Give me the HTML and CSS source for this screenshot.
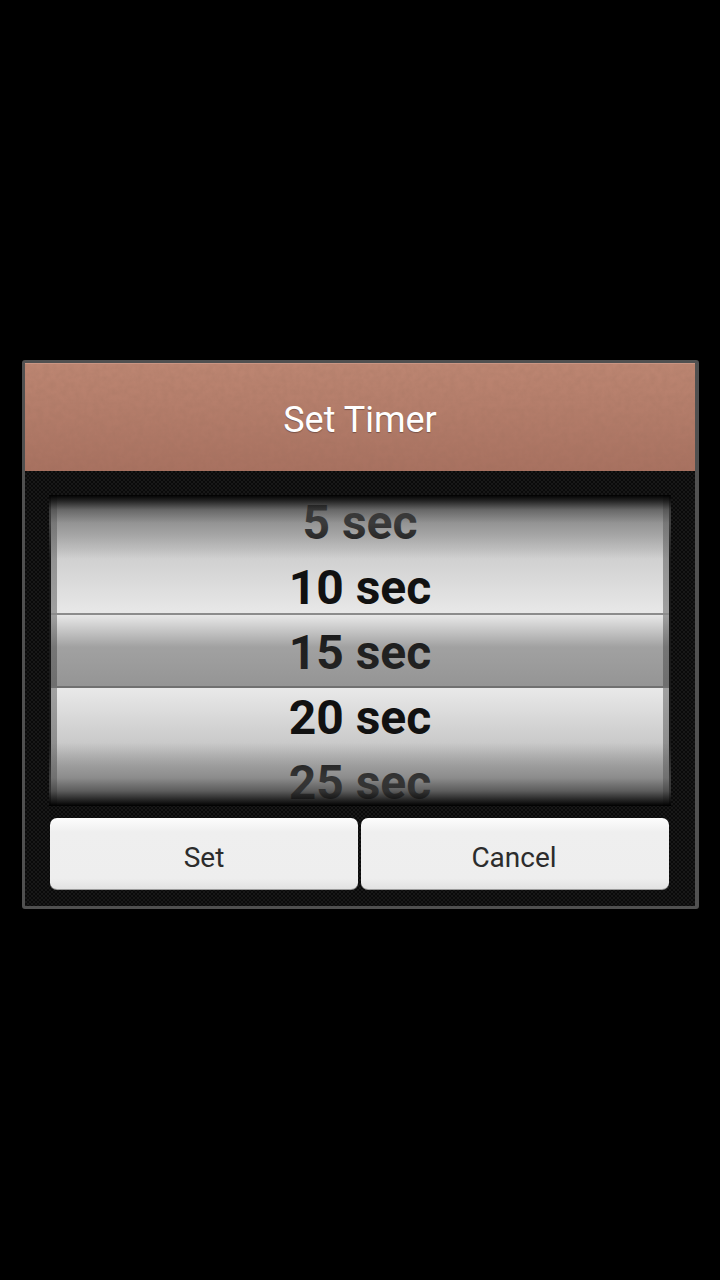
FILE: index.html
```html
<!DOCTYPE html>
<html lang="en">
<head>
  <meta charset="UTF-8">
  <meta name="viewport" content="width=device-width, initial-scale=1.0">
  <title>Set Timer</title>
  <link rel="stylesheet" href="styles.css">
</head>
<body>
  <!-- Timer dialog -->
  <div class="dialog">
    <div class="dialog-title">
      <svg class="title-grain" width="670" height="107" aria-hidden="true">
        <filter id="grain">
          <feTurbulence type="fractalNoise" baseFrequency="0.16" numOctaves="3" seed="4"/>
          <feColorMatrix values="0 0 0 0 0.3  0 0 0 0 0.15  0 0 0 0 0.1  0.3 0 0 0 -0.08"/>
        </filter>
        <rect width="670" height="107" filter="url(#grain)"/>
      </svg>
      <h2>Set Timer</h2>
    </div>

    <div class="dialog-body">
      <!-- Number wheel -->
      <div class="wheel">
        <ul class="wheel-list">
          <li>5 sec</li>
          <li>10 sec</li>
          <li>15 sec</li>
          <li>20 sec</li>
          <li>25 sec</li>
        </ul>
        <div class="wheel-rail wheel-rail-left"></div>
        <div class="wheel-rail wheel-rail-right"></div>
        <div class="wheel-band"></div>
        <div class="wheel-fade"></div>
      </div>

      <div class="dialog-buttons">
        <button type="button" class="btn">Set</button>
        <button type="button" class="btn">Cancel</button>
      </div>
    </div>
  </div>
</body>
</html>
```

FILE: styles.css
```css
* {
  box-sizing: border-box;
}

body {
  margin: 0;
  height: 1280px;
  background-color: #000;
  font-family: Roboto, "Liberation Sans", sans-serif;
  padding-top: 360px;
  overflow: hidden;
}

/* Outer frame of the dialog */
.dialog {
  width: 677px;
  height: 549px;
  margin-left: 22px;
  border: 3px solid #505050;
  border-right-width: 4px;
  border-radius: 3px;
  background-color: #0a0a0a;
  background-image:
    linear-gradient(45deg, #181818 25%, transparent 25%, transparent 75%, #181818 75%),
    linear-gradient(45deg, #181818 25%, transparent 25%, transparent 75%, #181818 75%);
  background-size: 4px 4px;
  background-position: 0 0, 2px 2px;
}

/* Copper title bar */
.dialog-title {
  position: relative;
  height: 108px;
  padding-top: 5px;
  display: flex;
  align-items: center;
  justify-content: center;
  background: linear-gradient(to bottom, #bd8672, #a87160);
  border-top: 1px solid #c99684;
  overflow: hidden;
}

.title-grain {
  position: absolute;
  top: 0;
  left: 0;
}

.dialog-title h2 {
  position: relative;
  margin: 0;
  font-size: 36px;
  font-weight: 400;
  color: #fff;
  text-shadow: 0 1px 1px rgba(0, 0, 0, 0.3);
}

.dialog-body {
  padding: 24px 24px 0;
}

/* Wheel with its rails, band and fade */
.wheel {
  position: relative;
  height: 311px;
  background: linear-gradient(to bottom, #bdbdbd 0, #c6c6c6 40px, #e8e8e8 118px, #e8e8e8 195px, #bdbdbd 270px, #bdbdbd 100%);
}

.wheel-list {
  list-style: none;
  margin: 0;
  padding: 5px 0 0;
  display: flex;
  flex-direction: column;
  gap: 19px;
}

.wheel-list li {
  height: 46px;
  line-height: 46px;
  text-align: center;
  font-size: 48px;
  font-weight: 700;
  color: #111;
}

.wheel-rail {
  position: absolute;
  top: 0;
  bottom: 0;
  width: 8px;
}

.wheel-rail-left {
  left: 0;
  background: linear-gradient(to right, #1a1a1a 0, #1a1a1a 1.5px, rgba(60, 60, 60, 0.42) 2px);
}

.wheel-rail-right {
  right: 0;
  background: linear-gradient(to left, #1a1a1a 0, #1a1a1a 1.5px, rgba(60, 60, 60, 0.42) 2px);
}

/* Selected row sits over the list */
.wheel-band {
  position: absolute;
  top: 118px;
  left: 2px;
  right: 2px;
  height: 75px;
  border-top: 2px solid #8c8c8c;
  border-bottom: 2px solid #707070;
  background: linear-gradient(to bottom, rgba(55, 55, 55, 0) 0, rgba(55, 55, 55, 0.4) 32px, rgba(55, 55, 55, 0.47) 100%);
}

.wheel-fade {
  position: absolute;
  inset: 0;
  background: linear-gradient(to bottom, #000 0, rgba(20, 20, 20, 0.9) 6px, rgba(70, 70, 70, 0.72) 15px, rgba(100, 100, 100, 0.5) 28px, rgba(120, 120, 120, 0) 64px, rgba(120, 120, 120, 0) 248px, rgba(90, 90, 90, 0.5) 283px, rgba(60, 60, 60, 0.75) 296px, rgba(20, 20, 20, 0.9) 305px, #000 100%);
}

.dialog-buttons {
  display: flex;
  gap: 3px;
  margin-top: 12px;
  padding: 0 1px;
}

.btn {
  width: 308px;
  height: 72px;
  padding: 7px 2px 0 0;
  border: none;
  border-bottom: 1px solid #9a9a9a;
  border-radius: 7px;
  background: linear-gradient(to bottom, #fdfdfd 0, #efefef 14px, #eeeeee 85%, #e2e2e2 100%);
  font-family: inherit;
  font-size: 28px;
  color: #2c2c2c;
}

.btn:first-child {
  padding-right: 0;
}
```
